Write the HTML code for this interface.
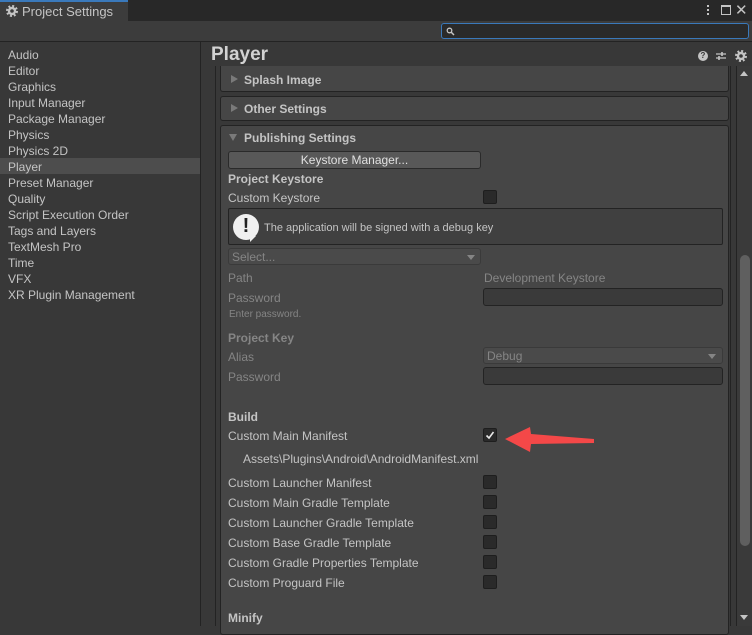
<!DOCTYPE html>
<html><head><style>
*{margin:0;padding:0;box-sizing:border-box}
body{width:752px;height:626px;overflow:hidden;background:#383838;font-family:"Liberation Sans",sans-serif;font-size:12px;color:#c4c4c4;position:relative}
.a{position:absolute;white-space:nowrap}
.t{line-height:16px}
.d{color:#858585}
.b{font-weight:bold}
.cb{position:absolute;width:14px;height:14px;background:#2a2a2a;border:1px solid #1e1e1e;border-radius:2px;left:483px}
.fld{position:absolute;background:#2a2a2a;border:1px solid #232323;border-radius:3px}
</style></head><body>
<!-- title bar -->
<div class="a" style="left:0;top:0;width:752px;height:21px;background:#282828"></div>
<div class="a" style="left:0;top:0;width:128px;height:21px;background:#3c3c3c;border-top:2px solid #3a79bb"></div>
<svg class="a" style="left:6px;top:5px" width="12" height="12" viewBox="0 0 12 12"><circle cx="6" cy="6" r="5" fill="none" stroke="#c4c4c4" stroke-width="2" stroke-dasharray="2 1.93"/><circle cx="6" cy="6" r="3" fill="none" stroke="#c4c4c4" stroke-width="2.4"/></svg>
<div class="a t" style="left:22px;top:4px;font-size:13px">Project Settings</div>
<div class="a" style="left:707px;top:5px;width:2px;height:2px;background:#c4c4c4;box-shadow:0 4px #c4c4c4,0 8px #c4c4c4"></div>
<div class="a" style="left:721px;top:5px;width:10px;height:10px;border:1px solid #c4c4c4;border-top-width:2px"></div>
<div class="a" style="left:735px;top:1px;font-size:15px;color:#c4c4c4">✕</div>
<!-- toolbar -->
<div class="a" style="left:0;top:21px;width:752px;height:21px;background:#3c3c3c;border-bottom:1px solid #232323"></div>
<div class="a" style="left:441px;top:23px;width:308px;height:16px;background:#2a2a2a;border:1px solid #3a79bb;border-radius:3px"></div>
<svg class="a" style="left:446px;top:27px" width="9" height="9" viewBox="0 0 9 9"><circle cx="3.5" cy="3.5" r="2.3" fill="none" stroke="#c4c4c4" stroke-width="1.3"/><path d="M5 5L8 8" stroke="#c4c4c4" stroke-width="1.5"/></svg>
<!-- sidebar -->
<div class="a" style="left:200px;top:42px;width:1px;height:584px;background:#232323"></div>
<div class="a" style="left:0;top:158px;width:200px;height:16px;background:#4d4d4d"></div>
<div class="a t" style="left:8px;top:47px">Audio<br>Editor<br>Graphics<br>Input Manager<br>Package Manager<br>Physics<br>Physics 2D<br>Player<br>Preset Manager<br>Quality<br>Script Execution Order<br>Tags and Layers<br>TextMesh Pro<br>Time<br>VFX<br>XR Plugin Management</div>
<!-- header -->
<div class="a b" style="left:211px;top:44px;font-size:19px;color:#d2d2d2">Player</div>
<div class="a" style="left:698px;top:51px;width:10px;height:10px;border-radius:50%;background:#c4c4c4;color:#383838;font-size:8px;font-weight:bold;text-align:center;line-height:10px">?</div>
<svg class="a" style="left:715px;top:50px" width="12" height="12" viewBox="0 0 12 12"><path d="M1 4H11M1 8H11" stroke="#c4c4c4" stroke-width="1.3"/><path d="M7 2V6M4 6V10" stroke="#c4c4c4" stroke-width="1.6"/></svg>
<svg class="a" style="left:735px;top:50px" width="12" height="12" viewBox="0 0 12 12"><circle cx="6" cy="6" r="5" fill="none" stroke="#c4c4c4" stroke-width="2" stroke-dasharray="2 1.93"/><circle cx="6" cy="6" r="3" fill="none" stroke="#c4c4c4" stroke-width="2.4"/></svg>
<!-- content -->
<div class="a" style="left:215px;top:66px;width:1px;height:560px;background:#232323"></div>
<div class="a" style="left:730px;top:66px;width:1px;height:560px;background:#232323"></div>
<div class="a" style="left:736px;top:66px;width:1px;height:560px;background:#232323"></div>
<div class="a" style="left:737px;top:66px;width:15px;height:560px;background:#3a3a3a"></div>
<div class="a" style="left:740px;top:255px;width:10px;height:291px;background:#5f5f5f;border-radius:5px"></div>
<div class="a" style="left:740px;top:71px;width:0;height:0;border-left:4px solid transparent;border-right:4px solid transparent;border-bottom:5px solid #c4c4c4"></div>
<div class="a" style="left:740px;top:615px;width:0;height:0;border-left:4px solid transparent;border-right:4px solid transparent;border-top:5px solid #c4c4c4"></div>

<div class="a" style="left:220px;top:66px;width:509px;height:26px;background:#464646;border:1px solid #232323;border-top:none;border-radius:0 0 3px 3px"></div>
<div class="a" style="left:220px;top:96px;width:509px;height:25px;background:#464646;border:1px solid #232323;border-radius:3px"></div>
<div class="a" style="left:220px;top:125px;width:509px;height:510px;background:#464646;border:1px solid #232323;border-radius:3px"></div>
<div class="a" style="left:231px;top:75px;border-top:4px solid transparent;border-bottom:4px solid transparent;border-left:7px solid #7a7a7a"></div>
<div class="a b t" style="left:244px;top:72px">Splash Image</div>
<div class="a" style="left:231px;top:104px;border-top:4px solid transparent;border-bottom:4px solid transparent;border-left:7px solid #7a7a7a"></div>
<div class="a b t" style="left:244px;top:101px">Other Settings</div>
<div class="a" style="left:229px;top:134px;border-left:4px solid transparent;border-right:4px solid transparent;border-top:7px solid #7a7a7a"></div>
<div class="a b t" style="left:244px;top:130px">Publishing Settings</div>
<div class="a" style="left:228px;top:151px;width:253px;height:18px;background:#585858;border:1px solid #2a2a2a;border-radius:3px;text-align:center;line-height:16px;color:#e0e0e0">Keystore Manager...</div>
<div class="a b t" style="left:228px;top:171px">Project Keystore</div>
<div class="a t" style="left:228px;top:190px">Custom Keystore</div>
<div class="cb" style="top:190px"></div>
<div class="a" style="left:228px;top:208px;width:495px;height:37px;background:#404040;border:1px solid #232323;border-radius:2px"></div>
<div class="a" style="left:233px;top:214px;width:26px;height:26px;border-radius:50%;background:#f0f0f0;color:#222;font-weight:bold;font-size:20px;text-align:center;line-height:24px">!</div>
<div class="a" style="left:250px;top:236px;width:0;height:0;border-top:6px solid #f0f0f0;border-right:6px solid transparent"></div>
<div class="a t" style="left:264px;top:220px;font-size:11px">The application will be signed with a debug key</div>
<div class="a" style="left:228px;top:248px;width:253px;height:17px;background:#4a4a4a;border:1px solid #3a3a3a;border-radius:3px"></div>
<div class="a t d" style="left:232px;top:249px">Select...</div>
<div class="a" style="left:467px;top:255px;border-left:4px solid transparent;border-right:4px solid transparent;border-top:5px solid #858585"></div>
<div class="a t d" style="left:228px;top:270px">Path</div>
<div class="a t d" style="left:484px;top:270px">Development Keystore</div>
<div class="a t d" style="left:228px;top:290px">Password</div>
<div class="fld" style="left:483px;top:288px;width:240px;height:18px;background:#3a3a3a"></div>
<div class="a t d" style="left:229px;top:307px;font-size:10px">Enter password.</div>
<div class="a b t d" style="left:228px;top:330px">Project Key</div>
<div class="a t d" style="left:228px;top:349px">Alias</div>
<div class="a" style="left:483px;top:347px;width:240px;height:17px;background:#4a4a4a;border:1px solid #3a3a3a;border-radius:3px"></div>
<div class="a t d" style="left:487px;top:348px">Debug</div>
<div class="a" style="left:708px;top:354px;border-left:4px solid transparent;border-right:4px solid transparent;border-top:5px solid #858585"></div>
<div class="a t d" style="left:228px;top:369px">Password</div>
<div class="fld" style="left:483px;top:367px;width:240px;height:18px;background:#3a3a3a"></div>
<div class="a b t" style="left:228px;top:409px">Build</div>
<div class="a t" style="left:228px;top:428px">Custom Main Manifest</div>
<div class="cb" style="top:428px"></div>
<svg class="a" style="left:485px;top:430px" width="10" height="10" viewBox="0 0 10 10"><path d="M1.5 5.5L4 8L8.5 2" fill="none" stroke="#e8e8e8" stroke-width="1.6"/></svg>
<svg class="a" style="left:500px;top:420px" width="100" height="40" viewBox="0 0 100 40"><polygon points="5,19 30,7 31,14 94,19 94,23 31,24 30,32" fill="#f44848"/></svg>
<div class="a t" style="left:243px;top:451px">Assets\Plugins\Android\AndroidManifest.xml</div>
<div class="a t" style="left:228px;top:475px">Custom Launcher Manifest</div>
<div class="cb" style="top:475px"></div>
<div class="a t" style="left:228px;top:495px">Custom Main Gradle Template</div>
<div class="cb" style="top:495px"></div>
<div class="a t" style="left:228px;top:515px">Custom Launcher Gradle Template</div>
<div class="cb" style="top:515px"></div>
<div class="a t" style="left:228px;top:535px">Custom Base Gradle Template</div>
<div class="cb" style="top:535px"></div>
<div class="a t" style="left:228px;top:555px">Custom Gradle Properties Template</div>
<div class="cb" style="top:555px"></div>
<div class="a t" style="left:228px;top:575px">Custom Proguard File</div>
<div class="cb" style="top:575px"></div>
<div class="a b t" style="left:228px;top:610px">Minify</div>
</body></html>
